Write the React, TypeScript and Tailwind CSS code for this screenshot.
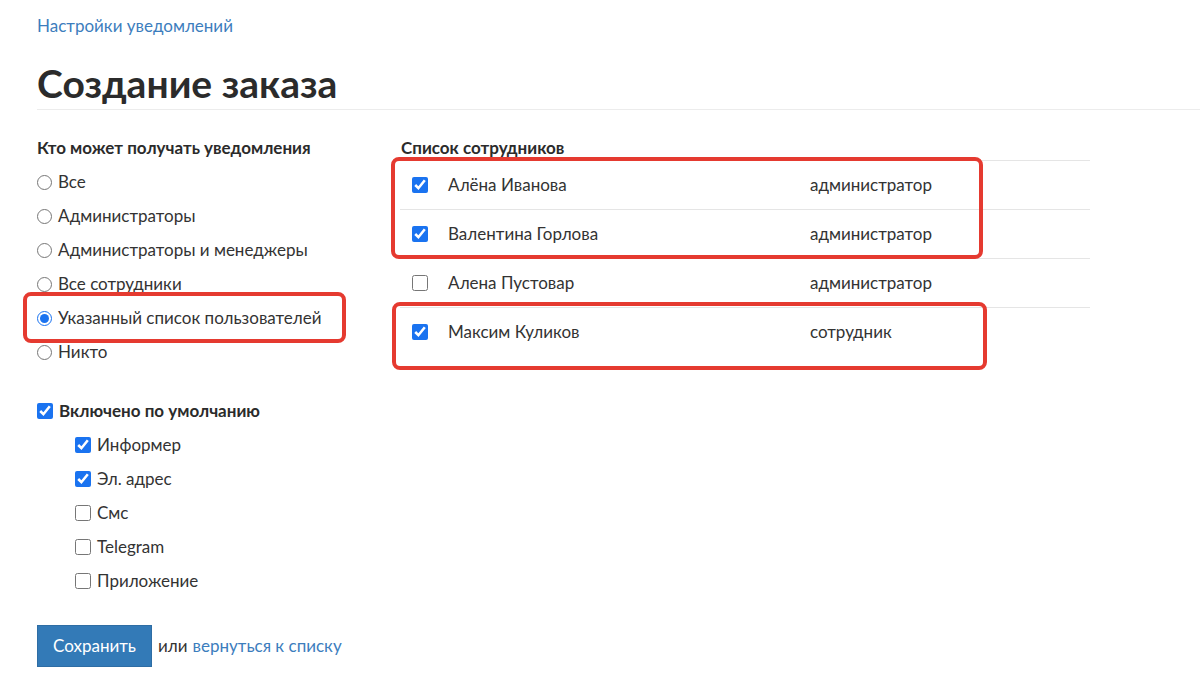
import { useState } from "react";

interface Employee {
  name: string;
  role: string;
  checked: boolean;
}

const recipients = [
  "Все",
  "Администраторы",
  "Администраторы и менеджеры",
  "Все сотрудники",
  "Указанный список пользователей",
  "Никто",
];

const channels = [
  { label: "Информер", checked: true },
  { label: "Эл. адрес", checked: true },
  { label: "Смс", checked: false },
  { label: "Telegram", checked: false },
  { label: "Приложение", checked: false },
];

const employees: Employee[] = [
  { name: "Алёна Иванова", role: "администратор", checked: true },
  { name: "Валентина Горлова", role: "администратор", checked: true },
  { name: "Алена Пустовар", role: "администратор", checked: false },
  { name: "Максим Куликов", role: "сотрудник", checked: true },
];

const App = () => {
  const [who, setWho] = useState(4);
  const [enabled, setEnabled] = useState(true);
  const [chan, setChan] = useState(channels.map(c => c.checked));
  const [emp, setEmp] = useState(employees.map(e => e.checked));

  return <div className="relative min-h-[693px] bg-white text-[#333] font-['Lato','Open_Sans',sans-serif] text-[17px]">
      <div className="pl-[37px] pt-[15px]">
        <a href="#" className="block leading-[22px] text-[#3c7dbd]">
          Настройки уведомлений
        </a>
        <h1 className="mt-[23px] text-[39px] leading-[46px] font-bold text-[#2b2b2b]">
          Создание заказа
        </h1>
      </div>
      <div className="ml-[37px] mt-[3px] border-t border-[#ececec]" />

      <div className="flex pl-[37px] pt-[27px]">
        {/* left column */}
        <div className="w-[363px] shrink-0">
          <div className="font-bold leading-[22px] text-[#2b2b2b]">Кто может получать уведомления</div>
          <div className="mt-[6px]">
            {recipients.map((r, i) => <label key={r} className="flex items-center h-[34px] cursor-pointer">
                <input type="radio" name="who" checked={who === i} onChange={() => setWho(i)} className="m-0 w-[15px] h-[15px] accent-[#1a73f0]" />
                <span className="ml-[6px]">{r}</span>
              </label>)}
          </div>

          <label className="mt-[25px] flex items-center h-[34px] cursor-pointer">
            <input type="checkbox" checked={enabled} onChange={() => setEnabled(!enabled)} className="m-0 w-[16px] h-[16px] accent-[#1a73f0]" />
            <span className="ml-[6px] font-bold text-[#2b2b2b]">Включено по умолчанию</span>
          </label>
          <div className="pl-[38px]">
            {channels.map((c, i) => <label key={c.label} className="flex items-center h-[34px] cursor-pointer">
                <input type="checkbox" checked={chan[i]} onChange={() => setChan(chan.map((v, j) => j === i ? !v : v))} className="m-0 w-[16px] h-[16px] accent-[#1a73f0]" />
                <span className="ml-[6px]">{c.label}</span>
              </label>)}
          </div>

          <div className="mt-[27px] flex items-center">
            <button className="h-[42px] w-[115px] bg-[#337ab7] border border-[#2e6da4] text-white text-[17px]">
              Сохранить
            </button>
            <span className="ml-[6px]">или</span>
            <a href="#" className="ml-[5px] text-[#3c7dbd]">вернуться к списку</a>
          </div>
        </div>

        {/* right column */}
        <div className="w-[690px]">
          <div className="pl-[1px] font-bold leading-[22px] text-[#2b2b2b]">Список сотрудников</div>
          <div className="mt-[1px]">
            {employees.map((e, i) => <div key={e.name} className="flex items-center h-[49px] border-t border-[#e5e5e5]">
                <input type="checkbox" checked={emp[i]} onChange={() => setEmp(emp.map((v, j) => j === i ? !v : v))} className="ml-[12px] m-0 w-[16px] h-[16px] accent-[#1a73f0]" />
                <span className="ml-[20px] w-[362px]">{e.name}</span>
                <span>{e.role}</span>
              </div>)}
          </div>
        </div>
      </div>

      {/* annotation frames */}
      <div className="absolute left-[23px] top-[292px] w-[323px] h-[51px] border-4 border-[#e53a30] rounded-[8px] pointer-events-none" />
      <div className="absolute left-[391px] top-[157px] w-[592px] h-[102px] border-4 border-[#e53a30] rounded-[8px] pointer-events-none" />
      <div className="absolute left-[392px] top-[302px] w-[595px] h-[68px] border-4 border-[#e53a30] rounded-[8px] pointer-events-none" />
    </div>;
};

export default App;
